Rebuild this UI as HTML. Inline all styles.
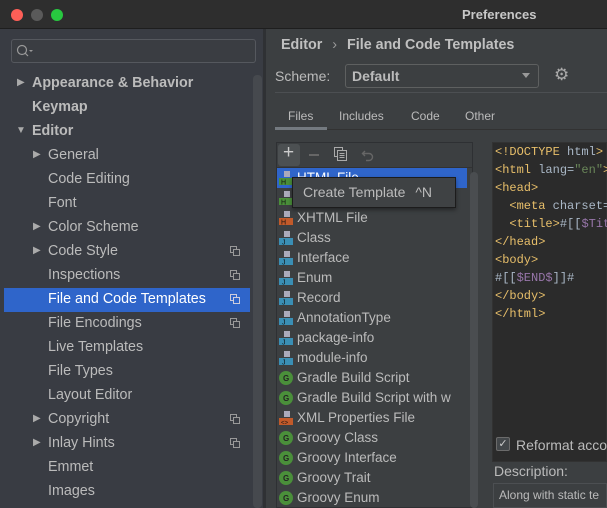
<!DOCTYPE html>
<html><head><meta charset="utf-8"><style>
*{margin:0;padding:0;box-sizing:border-box}
body{width:607px;height:508px;overflow:hidden;background:#3c3f41;font-family:"Liberation Sans",sans-serif;font-size:14.3px;color:#bbbbbb;position:relative}
.a{position:absolute;white-space:nowrap}
.title{left:0;top:0;width:607px;height:29px;background:#2e2e2e;border-bottom:1px solid #1e1e1e}
.dot{top:9px;width:12px;height:12px;border-radius:50%}
.side{left:0;top:29px;width:263px;height:479px;background:#393c43}
.si{position:absolute;left:0;width:250px;height:24px;line-height:24px;white-space:nowrap}
.b{font-weight:bold}
.tri{position:absolute;font-size:10px;color:#aaa}
.cp{position:absolute;left:230px;top:7px;width:10px;height:10px}
.row{position:absolute;left:0;width:194px;height:20px;line-height:20px;white-space:nowrap;font-size:13.5px}
.ic{position:absolute;left:2px;top:3px;width:14px;height:14px}
.code{font-family:"Liberation Mono",monospace;font-size:12px;position:absolute;left:495px;white-space:pre;color:#a9b7c6}
.t{color:#e8bf6a}.s{color:#6a8759}.v{color:#9876aa}
</style></head><body>
<div class="a" style="left:0;top:0;width:3px;height:508px;background:linear-gradient(#3a3a80,#5a2040,#701525)"></div>
<div class="a title"></div>
<div class="a dot" style="left:11px;background:#fe5f57"></div>
<div class="a dot" style="left:31px;background:#5a5a5a"></div>
<div class="a dot" style="left:51px;background:#28c840"></div>
<div class="a b" style="left:462px;top:7px;font-size:13px;color:#c8c8c8">Preferences</div>

<div class="a side"></div>
<div class="a" style="left:11px;top:39px;width:245px;height:24px;border:1px solid #55585e;border-radius:3px;background:#3a3d42"></div>
<svg class="a" style="left:15px;top:43px" width="20" height="16"><circle cx="7" cy="7" r="4.5" fill="none" stroke="#999" stroke-width="1.2"/><line x1="10" y1="10" x2="13" y2="13" stroke="#999" stroke-width="1.2"/><path d="M14 7l2 2 2-2z" fill="#999"/></svg>
<div class="a" style="left:253px;top:75px;width:9px;height:433px;background:#46494e;border-radius:4px"></div>
<div class="a" style="left:263px;top:29px;width:3px;height:479px;background:#2f3134"></div>

<div class="si" style="top:71px"><span class="tri" style="left:17px">▶</span><span class="b" style="position:absolute;left:32px;font-size:14.3px">Appearance &amp; Behavior</span></div>
<div class="si" style="top:95px"><span class="b" style="position:absolute;left:32px;font-size:14.3px">Keymap</span></div>
<div class="si" style="top:119px"><span class="tri" style="left:16px">▼</span><span class="b" style="position:absolute;left:32px;font-size:14.3px">Editor</span></div>
<div class="si" style="top:143px"><span class="tri" style="left:33px">▶</span><span style="position:absolute;left:48px">General</span></div>
<div class="si" style="top:167px"><span style="position:absolute;left:48px">Code Editing</span></div>
<div class="si" style="top:191px"><span style="position:absolute;left:48px">Font</span></div>
<div class="si" style="top:215px"><span class="tri" style="left:33px">▶</span><span style="position:absolute;left:48px">Color Scheme</span></div>
<div class="si" style="top:239px"><span class="tri" style="left:33px">▶</span><span style="position:absolute;left:48px">Code Style</span><svg class="cp"><rect x="0.5" y="0.5" width="6" height="6" fill="none" stroke="#999"/><rect x="3.5" y="3.5" width="6" height="6" fill="#393c43" stroke="#999"/></svg></div>
<div class="si" style="top:263px"><span style="position:absolute;left:48px">Inspections</span><svg class="cp"><rect x="0.5" y="0.5" width="6" height="6" fill="none" stroke="#999"/><rect x="3.5" y="3.5" width="6" height="6" fill="#393c43" stroke="#999"/></svg></div>
<div class="si" style="top:288px;left:4px;width:246px;height:24px;background:#2f65ca"></div>
<div class="si" style="top:287px;color:#fff"><span style="position:absolute;left:48px">File and Code Templates</span><svg class="cp"><rect x="0.5" y="0.5" width="6" height="6" fill="none" stroke="#ccd"/><rect x="3.5" y="3.5" width="6" height="6" fill="#2f65ca" stroke="#ccd"/></svg></div>
<div class="si" style="top:311px"><span style="position:absolute;left:48px">File Encodings</span><svg class="cp"><rect x="0.5" y="0.5" width="6" height="6" fill="none" stroke="#999"/><rect x="3.5" y="3.5" width="6" height="6" fill="#393c43" stroke="#999"/></svg></div>
<div class="si" style="top:335px"><span style="position:absolute;left:48px">Live Templates</span></div>
<div class="si" style="top:359px"><span style="position:absolute;left:48px">File Types</span></div>
<div class="si" style="top:383px"><span style="position:absolute;left:48px">Layout Editor</span></div>
<div class="si" style="top:407px"><span class="tri" style="left:33px">▶</span><span style="position:absolute;left:48px">Copyright</span><svg class="cp"><rect x="0.5" y="0.5" width="6" height="6" fill="none" stroke="#999"/><rect x="3.5" y="3.5" width="6" height="6" fill="#393c43" stroke="#999"/></svg></div>
<div class="si" style="top:431px"><span class="tri" style="left:33px">▶</span><span style="position:absolute;left:48px">Inlay Hints</span><svg class="cp"><rect x="0.5" y="0.5" width="6" height="6" fill="none" stroke="#999"/><rect x="3.5" y="3.5" width="6" height="6" fill="#393c43" stroke="#999"/></svg></div>
<div class="si" style="top:455px"><span style="position:absolute;left:48px">Emmet</span></div>
<div class="si" style="top:479px"><span style="position:absolute;left:48px">Images</span></div>

<!-- right -->
<div class="a b" style="left:281px;top:37px;font-size:14.3px;color:#c0c0c0">Editor <span style="font-weight:normal;color:#999;margin:0 6px">›</span> File and Code Templates</div>
<div class="a" style="left:275px;top:68px;font-size:14px">Scheme:</div>
<div class="a" style="left:345px;top:64px;width:194px;height:24px;border:1px solid #5e6060;border-radius:3px;background:#3c3f41"></div>
<div class="a b" style="left:352px;top:68px;font-size:14px">Default</div>
<div class="a" style="left:522px;top:73px;border-left:4px solid transparent;border-right:4px solid transparent;border-top:5px solid #999"></div>
<div class="a" style="left:554px;top:65px;font-size:17px;color:#aaa">⚙</div>
<div class="a" style="left:275px;top:92px;width:332px;height:1px;background:#4c4f52"></div>
<div class="a" style="left:288px;top:109px;font-size:12px">Files</div>
<div class="a" style="left:339px;top:109px;font-size:12px">Includes</div>
<div class="a" style="left:411px;top:109px;font-size:12px">Code</div>
<div class="a" style="left:465px;top:109px;font-size:12px">Other</div>
<div class="a" style="left:275px;top:129px;width:332px;height:1px;background:#323232"></div>
<div class="a" style="left:275px;top:127px;width:52px;height:3px;background:#747a80"></div>
<div class="a" style="left:266px;top:130px;width:341px;height:378px;background:#3c3f41"></div>

<div class="a" style="left:276px;top:142px;width:197px;height:366px;border:1px solid #2e3033;background:#3c3f41"></div>
<div class="a" style="left:278px;top:144px;width:22px;height:22px;background:#4c5052;border-radius:3px"></div>
<div class="a" style="left:283px;top:142px;font-size:19px;color:#ccc">+</div>
<div class="a" style="left:309px;top:154px;width:10px;height:1.5px;background:#666"></div>
<svg class="a" style="left:334px;top:147px" width="14" height="14"><rect x="0.5" y="0.5" width="8" height="9" fill="none" stroke="#aaa"/><rect x="3.5" y="3.5" width="9" height="10" fill="#3c3f41" stroke="#aaa"/><path d="M5.5 6.5h5M5.5 8.5h5M5.5 10.5h5" stroke="#aaa"/></svg>
<svg class="a" style="left:361px;top:148px" width="14" height="14"><path d="M4 3 L1.5 5.5 L4 8 M2 5.5h6a3.5 3.5 0 0 1 0 7H5" fill="none" stroke="#666" stroke-width="1.4"/></svg>
<div class="a" style="left:277px;top:167px;width:195px;height:1px;background:#323232"></div>
<div class="a" style="left:277px;top:168px;width:190px;height:20px;background:#2f65ca"></div>
<div class="a" style="left:470px;top:172px;width:8px;height:336px;background:#4a4d50;border-radius:4px"></div>

<div class="a" style="left:277px;top:168px;width:190px">
<div class="row" style="top:0;color:#fff"><svg class="ic"><rect x="5" y="0" width="6" height="6" fill="#aab"/><rect x="0" y="7" width="14" height="7" fill="#4a8f3a"/><text x="2" y="13.5" font-size="7" fill="#111" font-family="Liberation Sans">H</text></svg><span style="position:absolute;left:20px">HTML File</span></div>
<div class="row" style="top:20px"><svg class="ic"><rect x="5" y="0" width="6" height="6" fill="#aab"/><rect x="0" y="7" width="14" height="7" fill="#4a8f3a"/><text x="2" y="13.5" font-size="7" fill="#111">H</text></svg></div>
<div class="row" style="top:40px"><svg class="ic"><rect x="5" y="0" width="6" height="6" fill="#aab"/><rect x="0" y="7" width="14" height="7" fill="#c25a2a"/><text x="2" y="13.5" font-size="7" fill="#111">H</text></svg><span style="position:absolute;left:20px">XHTML File</span></div>
<div class="row" style="top:60px"><svg class="ic"><rect x="5" y="0" width="6" height="6" fill="#aab"/><rect x="0" y="7" width="14" height="7" fill="#3a8fb5"/><text x="3" y="13.5" font-size="7" fill="#111">J</text></svg><span style="position:absolute;left:20px">Class</span></div>
<div class="row" style="top:80px"><svg class="ic"><rect x="5" y="0" width="6" height="6" fill="#aab"/><rect x="0" y="7" width="14" height="7" fill="#3a8fb5"/><text x="3" y="13.5" font-size="7" fill="#111">J</text></svg><span style="position:absolute;left:20px">Interface</span></div>
<div class="row" style="top:100px"><svg class="ic"><rect x="5" y="0" width="6" height="6" fill="#aab"/><rect x="0" y="7" width="14" height="7" fill="#3a8fb5"/><text x="3" y="13.5" font-size="7" fill="#111">J</text></svg><span style="position:absolute;left:20px">Enum</span></div>
<div class="row" style="top:120px"><svg class="ic"><rect x="5" y="0" width="6" height="6" fill="#aab"/><rect x="0" y="7" width="14" height="7" fill="#3a8fb5"/><text x="3" y="13.5" font-size="7" fill="#111">J</text></svg><span style="position:absolute;left:20px">Record</span></div>
<div class="row" style="top:140px"><svg class="ic"><rect x="5" y="0" width="6" height="6" fill="#aab"/><rect x="0" y="7" width="14" height="7" fill="#3a8fb5"/><text x="3" y="13.5" font-size="7" fill="#111">J</text></svg><span style="position:absolute;left:20px">AnnotationType</span></div>
<div class="row" style="top:160px"><svg class="ic"><rect x="5" y="0" width="6" height="6" fill="#aab"/><rect x="0" y="7" width="14" height="7" fill="#3a8fb5"/><text x="3" y="13.5" font-size="7" fill="#111">J</text></svg><span style="position:absolute;left:20px">package-info</span></div>
<div class="row" style="top:180px"><svg class="ic"><rect x="5" y="0" width="6" height="6" fill="#aab"/><rect x="0" y="7" width="14" height="7" fill="#3a8fb5"/><text x="3" y="13.5" font-size="7" fill="#111">J</text></svg><span style="position:absolute;left:20px">module-info</span></div>
<div class="row" style="top:200px"><svg class="ic"><circle cx="7" cy="7" r="7" fill="#4a8f3a"/><text x="4" y="10" font-size="8" fill="#222" font-weight="bold">G</text></svg><span style="position:absolute;left:20px">Gradle Build Script</span></div>
<div class="row" style="top:220px"><svg class="ic"><circle cx="7" cy="7" r="7" fill="#4a8f3a"/><text x="4" y="10" font-size="8" fill="#222" font-weight="bold">G</text></svg><span style="position:absolute;left:20px">Gradle Build Script with w</span></div>
<div class="row" style="top:240px"><svg class="ic"><rect x="5" y="0" width="6" height="6" fill="#aab"/><rect x="0" y="7" width="14" height="7" fill="#c25a2a"/><text x="2" y="13.5" font-size="6" fill="#111">&lt;&gt;</text></svg><span style="position:absolute;left:20px">XML Properties File</span></div>
<div class="row" style="top:260px"><svg class="ic"><circle cx="7" cy="7" r="7" fill="#4a8f3a"/><text x="4" y="10" font-size="8" fill="#222" font-weight="bold">G</text></svg><span style="position:absolute;left:20px">Groovy Class</span></div>
<div class="row" style="top:280px"><svg class="ic"><circle cx="7" cy="7" r="7" fill="#4a8f3a"/><text x="4" y="10" font-size="8" fill="#222" font-weight="bold">G</text></svg><span style="position:absolute;left:20px">Groovy Interface</span></div>
<div class="row" style="top:300px"><svg class="ic"><circle cx="7" cy="7" r="7" fill="#4a8f3a"/><text x="4" y="10" font-size="8" fill="#222" font-weight="bold">G</text></svg><span style="position:absolute;left:20px">Groovy Trait</span></div>
<div class="row" style="top:320px"><svg class="ic"><circle cx="7" cy="7" r="7" fill="#4a8f3a"/><text x="4" y="10" font-size="8" fill="#222" font-weight="bold">G</text></svg><span style="position:absolute;left:20px">Groovy Enum</span></div>
</div>

<div class="a" style="left:292px;top:177px;width:164px;height:31px;background:#3f4244;border:1px solid #1c1c1c;box-shadow:0 2px 4px rgba(0,0,0,.4)"></div>
<div class="a" style="left:303px;top:184px;font-size:14px;color:#bbb">Create Template <span style="margin-left:6px">^N</span></div>

<div class="a" style="left:492px;top:142px;width:115px;height:320px;background:#2b2b2b;border:1px solid #323232"></div>
<div class="code t" style="top:145px">&lt;!DOCTYPE <span style="color:#a9b7c6">html</span>&gt;</div>
<div class="code" style="top:163px"><span class="t">&lt;html </span>lang=<span class="s">"en"</span><span class="t">&gt;</span></div>
<div class="code t" style="top:181px">&lt;head&gt;</div>
<div class="code" style="top:199px">  <span class="t">&lt;meta </span>charset=</div>
<div class="code" style="top:217px">  <span class="t">&lt;title&gt;</span>#[[<span class="v">$Tit</span></div>
<div class="code t" style="top:235px">&lt;/head&gt;</div>
<div class="code t" style="top:253px">&lt;body&gt;</div>
<div class="code" style="top:271px">#[[<span class="v">$END$</span>]]#</div>
<div class="code t" style="top:289px">&lt;/body&gt;</div>
<div class="code t" style="top:307px">&lt;/html&gt;</div>

<div class="a" style="left:496px;top:437px;width:14px;height:14px;border:1px solid #6b6b6b;border-radius:2px;background:#43474a;color:#ccc;font-size:11px;line-height:12px;text-align:center">✓</div>
<div class="a" style="left:516px;top:437px;font-size:14px">Reformat acco</div>
<div class="a" style="left:494px;top:463px;font-size:14px">Description:</div>
<div class="a" style="left:493px;top:483px;width:114px;height:25px;border:1px solid #4c4f52;background:#3c3f41"></div>
<div class="a" style="left:499px;top:488px;font-size:12px;color:#bbb">Along with static te</div>
</body></html>
